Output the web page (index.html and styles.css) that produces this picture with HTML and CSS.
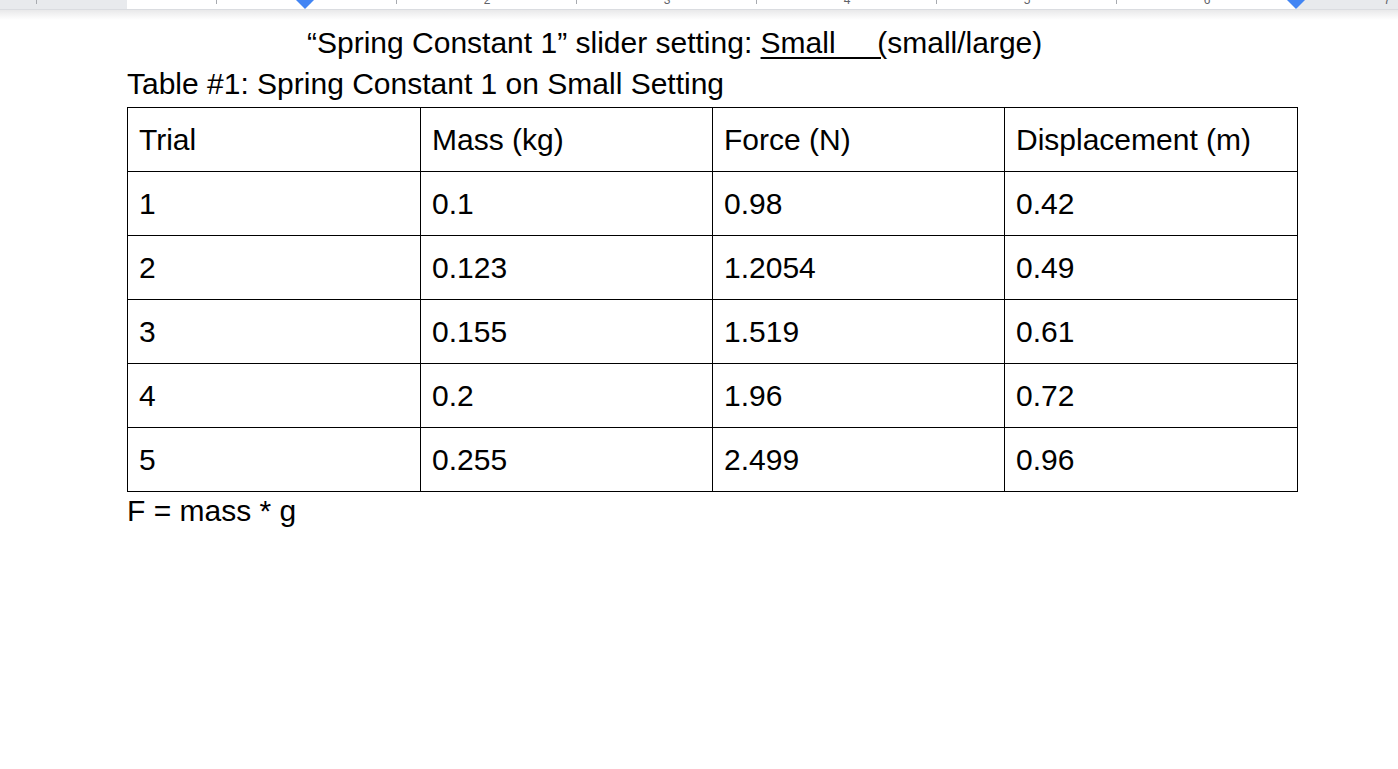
FILE: index.html
```html
<!DOCTYPE html>
<html>
<head>
<meta charset="utf-8">
<link rel="stylesheet" href="styles.css">
</head>
<body>
<div class="ruler">
  <div class="ruler-page"></div>
  <div class="ruler-ticks"></div>
  <div class="ruler-nums">
    <span></span><span>1</span><span>2</span><span>3</span><span>4</span><span>5</span><span>6</span><span>7</span>
  </div>
  <div class="indent indent-left"></div>
  <div class="indent indent-right"></div>
</div>
<div class="ruler-shadow"></div>
<div class="doc">
  <p class="line setting">“Spring Constant 1” slider setting: <span class="u">Small&nbsp;&nbsp;&nbsp;&nbsp;&nbsp;(</span>small/large)</p>
  <p class="line caption">Table #1: Spring Constant 1 on Small Setting</p>
  <table class="data">
    <colgroup><col class="c1"><col class="c2"><col class="c3"><col class="c4"></colgroup>
    <tr><td>Trial</td><td>Mass (kg)</td><td>Force (N)</td><td>Displacement (m)</td></tr>
    <tr><td>1</td><td>0.1</td><td>0.98</td><td>0.42</td></tr>
    <tr><td>2</td><td>0.123</td><td>1.2054</td><td>0.49</td></tr>
    <tr><td>3</td><td>0.155</td><td>1.519</td><td>0.61</td></tr>
    <tr><td>4</td><td>0.2</td><td>1.96</td><td>0.72</td></tr>
    <tr><td>5</td><td>0.255</td><td>2.499</td><td>0.96</td></tr>
  </table>
  <p class="line formula">F = mass * g</p>
</div>
</body>
</html>
```
FILE: styles.css
```css
html, body {
  margin: 0;
  padding: 0;
  background: #ffffff;
}
body {
  font-family: "Liberation Sans", Arial, sans-serif;
  color: #000;
  width: 1398px;
  height: 769px;
  overflow: hidden;
}
.ruler {
  position: relative;
  height: 9px;
  background: #e8eaed;
  border-bottom: 1px solid #dadce0;
  overflow: hidden;
}
.ruler-page {
  margin-left: 127px;
  width: 1170px;
  height: 9px;
  background: #ffffff;
}
.ruler-ticks {
  position: absolute;
  left: 0;
  top: 0;
  width: 1398px;
  height: 4px;
  background: repeating-linear-gradient(to right, transparent 0, transparent 36px, #a8abb0 36px, #a8abb0 37px, transparent 37px, transparent 180px);
}
.ruler-nums {
  position: absolute;
  left: 37px;
  top: -6px;
  display: flex;
  font-size: 12px;
  line-height: 12px;
  color: #5f6368;
}
.ruler-nums span {
  width: 180px;
  text-align: center;
}
.indent {
  position: absolute;
  top: 0;
  width: 0;
  height: 0;
  border-left: 9px solid transparent;
  border-right: 9px solid transparent;
  border-top: 9px solid #4285f4;
}
.indent-left { left: 296px; }
.indent-right { left: 1287px; }
.ruler-shadow {
  height: 10px;
  background: linear-gradient(to bottom, #e9e9ea, #ffffff);
}
.doc {
  margin-left: 127px;
  width: 1170px;
  padding-top: 4px;
}
.line {
  margin: 0;
  font-size: 30px;
  line-height: 38px;
}
.setting {
  padding-left: 180px;
  margin-bottom: 3px;
}
.u {
  text-decoration: underline;
  text-decoration-thickness: 2px;
  text-underline-offset: 4px;
}
.caption {
  margin-bottom: 4px;
}
.data {
  border-collapse: collapse;
  width: 1171px;
  table-layout: fixed;
}
.c1 { width: 293px; }
.c2 { width: 292px; }
.c3 { width: 292px; }
.c4 { width: 293px; }
.data td {
  border: 1px solid #000;
  padding: 13px 12px 12px 11px;
  font-size: 30px;
  line-height: 38px;
  vertical-align: top;
}
.formula {
  margin-top: 0;
}
```
